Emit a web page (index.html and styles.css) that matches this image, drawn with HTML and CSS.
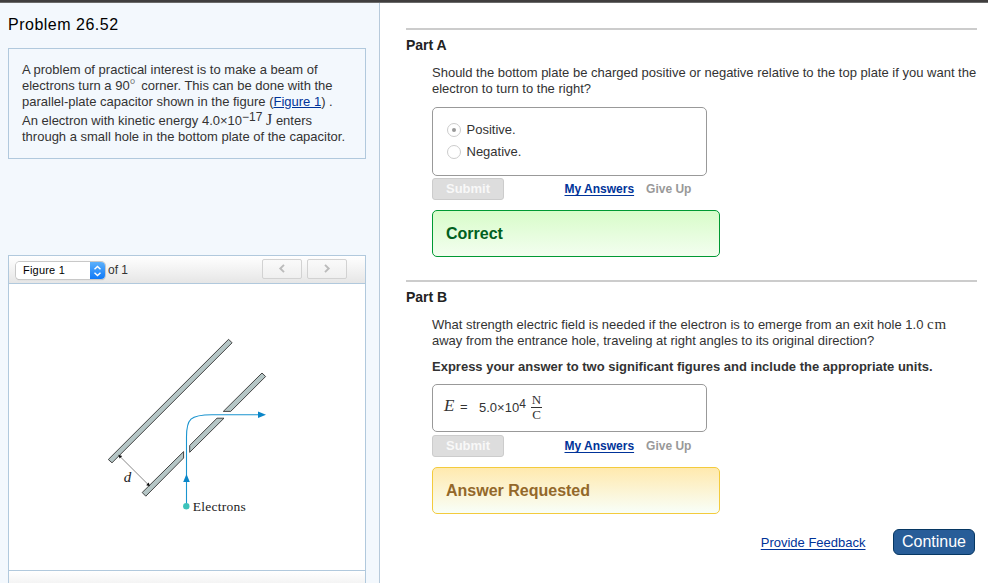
FILE: index.html
```html
<!DOCTYPE html>
<html lang="en">
<head>
    <meta charset="UTF-8">
    <meta name="viewport" content="width=device-width, initial-scale=1.0">
    <title>Problem 26.52</title>
    <link rel="stylesheet" href="styles.css">
</head>
<body>
<div class="topbar"></div>
<div class="page">
    <div class="sidebar">
        <h1>Problem 26.52</h1>
        <div class="problem">
            <div class="line">A problem of practical interest is to make a beam of</div>
            <div class="line">electrons turn a 90<span class="degree">°</span> corner. This can be done with the</div>
            <div class="line">parallel-plate capacitor shown in the figure (<a href="#figure">Figure 1</a>) .</div>
            <div class="line energy">An electron with kinetic energy 4.0×10<sup>−17</sup> <span class="unit">J</span> enters</div>
            <div class="line">through a small hole in the bottom plate of the capacitor.</div>
        </div>

        <div class="figure" id="figure">
            <div class="figure-header">
                <div class="select-box">
                    <select><option>Figure 1</option></select>
                    <span class="select-arrows">
                        <svg width="15" height="18" viewBox="0 0 15 18"><path d="M4.5 7.3 L7.5 4.4 L10.5 7.3 M4.5 10.7 L7.5 13.6 L10.5 10.7" fill="none" stroke="#fff" stroke-width="1.4"/></svg>
                    </span>
                </div>
                <span class="of">of 1</span>
                <div class="pager">
                    <button><svg width="8" height="9" viewBox="0 0 8 9"><path d="M6 0.8 L2.3 4.5 L6 8.2" fill="none" stroke="#bbb" stroke-width="1.9"/></svg></button>
                    <button><svg width="8" height="9" viewBox="0 0 8 9"><path d="M2 0.8 L5.7 4.5 L2 8.2" fill="none" stroke="#bbb" stroke-width="1.9"/></svg></button>
                </div>
            </div>
            <svg class="diagram" width="356" height="286" viewBox="9 284 356 286">
                <!-- capacitor plates -->
                <g fill="#b5c6c6" stroke="#333" stroke-width="0.9">
                    <path d="M108.3 459.5 L228.6 339.3 L232.1 342.8 L112 462.8 Z"/>
                    <path d="M142.2 492.5 L183.6 451.6 V458 L145.8 496.2 Z"/>
                    <path d="M189.7 445.4 L217 418.2 H224 L189.7 452.3 Z"/>
                    <path d="M223.3 411.4 L262 373 L265.6 376.5 L230.7 411.4 Z"/>
                </g>
                <!-- electron path -->
                <path d="M186.5 506 V437 C186.5 419 190 414.7 212 414.7 H260" fill="none" stroke="#1a94cf" stroke-width="1.1"/>
                <path d="M258 411.4 L266 414.7 L258 418 Z M183.2 482 L186.5 474 L189.8 482 Z" fill="#0a86c8"/>
                <circle cx="186.3" cy="506.3" r="3.2" fill="#3dc3bb"/>
                <!-- plate spacing -->
                <path d="M119.5 456 L148.8 485.2" stroke="#555" stroke-width="0.7"/>
                <path d="M118.3 454.8 L122.2 456 L119.6 458.6 Z M150 486.3 L146.2 485.2 L148.7 482.6 Z" fill="#111"/>
                <text class="dist" x="123.8" y="482">d</text>
                <text class="electrons" x="192.7" y="511" textLength="53">Electrons</text>
            </svg>
            <div class="figure-footer"></div>
        </div>
    </div>

    <div class="main">
        <div class="part part-a">
            <h2>Part A</h2>
            <div class="part-body">
                <div class="line">Should the bottom plate be charged positive or negative relative to the top plate if you want the</div>
                <div class="line">electron to turn to the right?</div>
                <div class="answer choices">
                    <label><span class="radio checked"></span>Positive.</label>
                    <label><span class="radio"></span>Negative.</label>
                </div>
                <div class="actions">
                    <button class="submit" disabled>Submit</button>
                    <a href="#">My Answers</a>
                    <span class="give-up">Give Up</span>
                </div>
                <div class="result correct">Correct</div>
            </div>
        </div>

        <div class="part part-b">
            <h2>Part B</h2>
            <div class="part-body">
                <div class="line">What strength electric field is needed if the electron is to emerge from an exit hole 1.0 <span class="unit cm">cm</span></div>
                <div class="line">away from the entrance hole, traveling at right angles to its original direction?</div>
                <div class="line express"><b>Express your answer to two significant figures and include the appropriate units.</b></div>
                <div class="answer equation">
                    <span class="var">E</span>
                    <span class="eq">=</span>
                    <span class="value">5.0×10<sup>4</sup></span>
                    <span class="fraction"><span>N</span><span>C</span></span>
                </div>
                <div class="actions">
                    <button class="submit" disabled>Submit</button>
                    <a href="#">My Answers</a>
                    <span class="give-up">Give Up</span>
                </div>
                <div class="result requested">Answer Requested</div>
            </div>
        </div>

        <div class="bottom">
            <a href="#">Provide Feedback</a>
            <button class="continue">Continue</button>
        </div>
    </div>
</div>
</body>
</html>
```
FILE: styles.css
```css
* {
    margin: 0;
    padding: 0;
    box-sizing: border-box;
}

body {
    height: 583px;
    overflow: hidden;
    background: #fff;
    color: #333;
    font-family: "Liberation Sans", Arial, sans-serif;
    font-size: 13px;
    line-height: 16px;
}

a {
    color: #039;
}

.topbar {
    height: 3px;
    background: #403e3e;
    border-bottom: 1px solid #6a6a6a;
}

.page {
    display: flex;
    height: 580px;
}

.sidebar {
    width: 380px;
    padding: 12px 13px 0 8px;
    background: #f3f8fd;
    border-right: 1px solid #b7cadb;
}

h1 {
    font-size: 16px;
    line-height: 20px;
    font-weight: normal;
    color: #000;
    letter-spacing: 0.5px;
}

.line {
    height: 16px;
    white-space: nowrap;
}

.problem {
    width: 358px;
    height: 111px;
    margin-top: 13px;
    padding: 13px;
    border: 1px solid #b1c9dd;
}

.energy {
    margin-top: 3px;
}

.degree {
    display: inline-block;
    width: 8px;
    font-family: "Liberation Serif", serif;
    font-size: 14px;
    line-height: 0;
    vertical-align: 1px;
    color: #666;
}

sup {
    font-size: 12px;
    line-height: 0;
    vertical-align: 4px;
}

.energy sup {
    font-size: 12px;
    vertical-align: 4.5px;
}

.unit {
    font-family: "Liberation Serif", serif;
    font-size: 15px;
    line-height: 0;
}

.energy .unit {
    font-size: 16px;
}

.cm {
    letter-spacing: 0.9px;
}

.figure {
    width: 358px;
    margin-top: 96px;
    border: 1px solid #b1c9dd;
    background: #fff;
}

.figure-header {
    display: flex;
    align-items: center;
    height: 28px;
    padding: 0 18px 0 7px;
    background: linear-gradient(#fff, #e6e6e6);
    border-bottom: 1px solid #b1c9dd;
}

.select-box {
    display: flex;
    width: 89px;
    height: 17px;
    margin-top: 1px;
    border-radius: 4px;
    background: #fff;
    overflow: hidden;
    box-shadow: 0 0 0 1px #c8c8c8, 0 1px 1px #aaa;
}

.select-box select {
    width: 74px;
    border: none;
    padding-left: 7px;
    appearance: none;
    background: #fff;
    color: #000;
    font-family: "Liberation Sans", Arial, sans-serif;
    font-size: 11px;
    letter-spacing: 0.2px;
}

.select-arrows {
    width: 15px;
    height: 18px;
    background: linear-gradient(#5cb0fb, #0a76f8);
}

.of {
    margin-left: 3px;
    font-size: 12px;
}

.pager {
    display: flex;
    gap: 5px;
    margin-left: auto;
    margin-top: -2px;
}

.pager button {
    width: 40px;
    height: 20px;
    border: 1px solid #d2d2d2;
    border-radius: 2px;
    background: linear-gradient(#fafafa, #efefef);
    line-height: 0;
}

.diagram {
    display: block;
    font-family: "Liberation Serif", serif;
    fill: #222;
}

.dist {
    font-size: 15px;
    font-style: italic;
}

.electrons {
    font-size: 13.5px;
}

.figure-footer {
    height: 28px;
    border-top: 1px solid #b1c9dd;
    background: linear-gradient(#fff, #e6e6e6);
}

.main {
    width: 608px;
    padding: 25px 11px 0 26px;
}

.part {
    width: 571px;
    border-top: 2px solid #ccc;
}

.part-a {
    height: 252px;
}

.part-b {
    height: 248px;
}

h2 {
    padding-top: 7px;
    color: #222;
    font-size: 14px;
    line-height: 17px;
}

.part-body {
    padding: 11px 0 0 26px;
}

.answer {
    width: 275px;
    border: 1px solid #999;
    border-radius: 5px;
}

.choices {
    height: 69px;
    margin-top: 10px;
    padding: 11px 14px;
}

.choices label {
    display: flex;
    align-items: center;
    height: 22px;
}

.radio {
    display: flex;
    width: 14px;
    height: 14px;
    margin-right: 5.5px;
    border: 1px solid #ccc;
    border-radius: 50%;
}

.checked::after {
    content: "";
    width: 4px;
    height: 4px;
    margin: auto;
    border-radius: 50%;
    background: #999;
}

.actions {
    display: flex;
    height: 22px;
    margin-top: 2px;
    font-size: 12px;
    font-weight: bold;
    line-height: 23px;
}

.submit {
    width: 72px;
    height: 22px;
    margin-right: 60.5px;
    padding-bottom: 2px;
    border: 1px solid #ccc;
    border-radius: 3px;
    background: #ddd;
    color: #f8f8f8;
    font-family: "Liberation Sans", Arial, sans-serif;
    font-size: 13px;
    font-weight: bold;
}

.actions a {
    text-underline-offset: 2px;
}

.give-up {
    margin-left: 12px;
    color: #999;
}

.result {
    width: 288px;
    height: 47px;
    margin-top: 10px;
    padding-left: 13px;
    border: 1px solid;
    border-radius: 5px;
    font-size: 16px;
    font-weight: bold;
    line-height: 45px;
}

.correct {
    border-color: #093;
    background: linear-gradient(#d8fcc9, #f3fef0);
    color: #006020;
}

.requested {
    border-color: #f3cb3d;
    background: linear-gradient(#ffe9ae, #f8fff9);
    color: #93682a;
}

.express {
    margin-top: 10px;
}

.equation {
    display: flex;
    height: 48px;
    margin-top: 9px;
    padding-left: 11px;
}

.var {
    width: 16px;
    padding-top: 13px;
    font-family: "Liberation Serif", serif;
    font-size: 17px;
    font-style: italic;
}

.eq {
    width: 19px;
    padding-top: 14px;
}

.value {
    width: 52px;
    padding-top: 15px;
}

.fraction {
    width: 11px;
    padding-top: 7px;
    font-family: "Liberation Serif", serif;
    font-size: 13px;
    line-height: 15px;
    text-align: center;
}

.fraction span {
    display: block;
}

.fraction span + span {
    border-top: 1px solid #333;
    line-height: 14px;
}

.equation + .actions {
    margin-top: 3px;
}

.bottom {
    display: flex;
    align-items: center;
    justify-content: flex-end;
    width: 569px;
    height: 26px;
    margin-top: 1px;
}

.bottom a {
    padding-top: 2px;
    text-underline-offset: 2px;
}

.continue {
    width: 82px;
    height: 26px;
    margin-left: 27.5px;
    border: 1px solid #063763;
    border-radius: 6px;
    background: #285d98;
    color: #fff;
    font-family: "Liberation Sans", Arial, sans-serif;
    font-size: 16px;
}
```
